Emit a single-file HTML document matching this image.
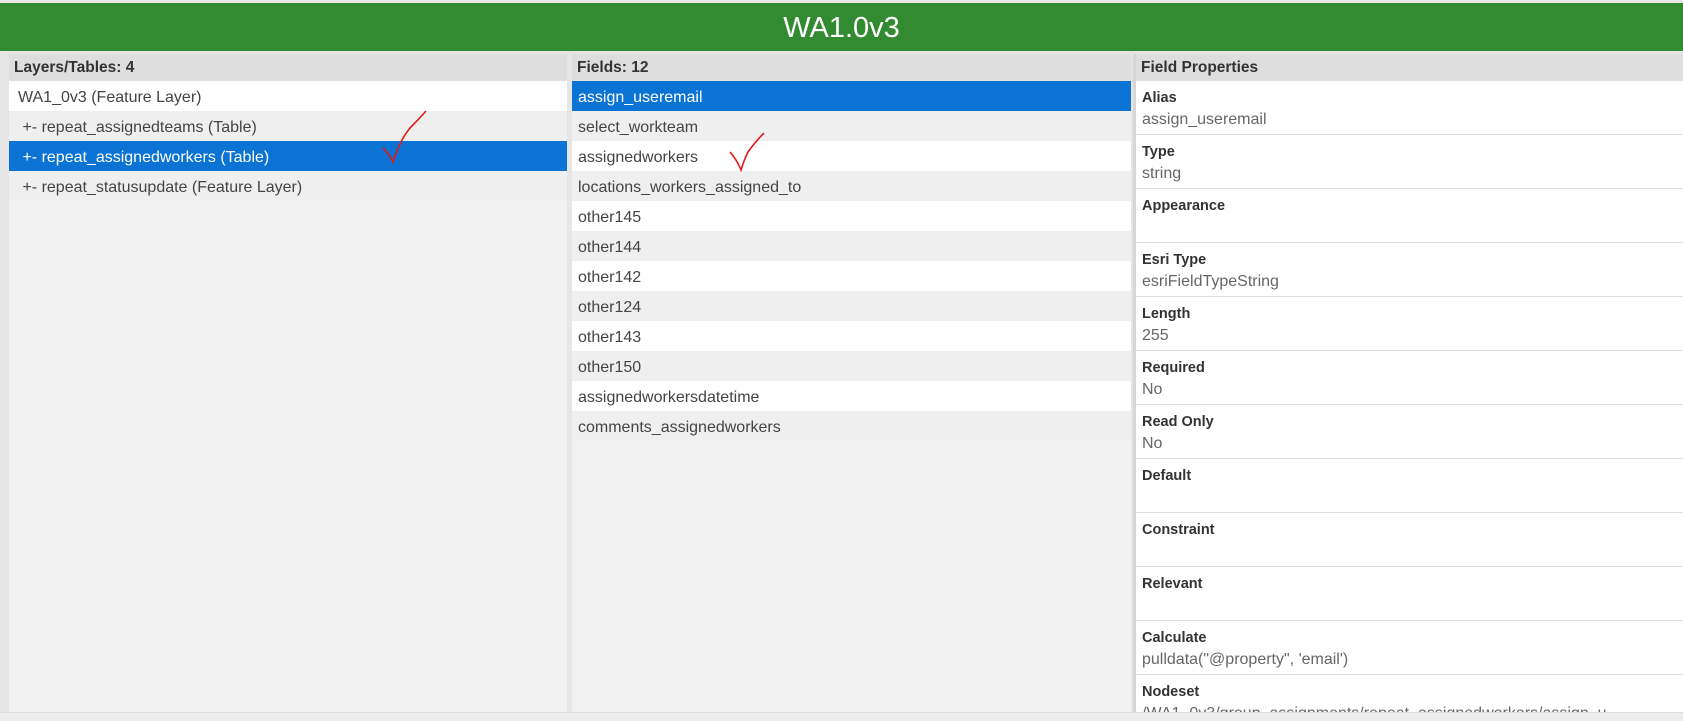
<!DOCTYPE html>
<html><head><meta charset="utf-8"><style>
*{margin:0;padding:0;box-sizing:border-box}
body{width:1683px;height:721px;overflow:hidden;background:#e6e6e6;font-family:"Liberation Sans",sans-serif;position:relative}
#hdr{position:absolute;left:0;top:3px;width:1683px;height:48px;background:#328a31;color:#fff;font-size:29px;text-align:center;line-height:50px}
.panel{position:absolute;top:54px;background:#f2f2f2}
.ph{height:27px;background:#dedede;font-weight:bold;font-size:15.5px;color:#333;line-height:28px;padding-left:5px}
.row{height:30px;line-height:33px;font-size:16px;color:#444;padding-left:9px;white-space:nowrap;overflow:hidden}
.w{background:#fff}.g{background:#efefef}.s{background:#0a73d3;color:#fff}
.prop{height:54px;border-bottom:1px solid #ddd;background:#fff;padding-left:6px;overflow:hidden}
.prop b{display:block;font-size:14.5px;color:#333;padding-top:9px;height:30px}
.prop span{display:block;font-size:16px;color:#666;white-space:nowrap;line-height:18px}
</style></head><body>
<div id="hdr">WA1.0v3</div>
<div class="panel" style="left:9px;width:558px;height:658px">
<div class="ph">Layers/Tables: 4</div>
<div class="row w">WA1_0v3 (Feature Layer)</div>
<div class="row g">&nbsp;+- repeat_assignedteams (Table)</div>
<div class="row s">&nbsp;+- repeat_assignedworkers (Table)</div>
<div class="row g">&nbsp;+- repeat_statusupdate (Feature Layer)</div>
</div>
<div class="panel" style="left:572px;width:559px;height:658px">
<div class="ph">Fields: 12</div>
<div class="row s" style="padding-left:6px">assign_useremail</div>
<div class="row g" style="padding-left:6px">select_workteam</div>
<div class="row w" style="padding-left:6px">assignedworkers</div>
<div class="row g" style="padding-left:6px">locations_workers_assigned_to</div>
<div class="row w" style="padding-left:6px">other145</div>
<div class="row g" style="padding-left:6px">other144</div>
<div class="row w" style="padding-left:6px">other142</div>
<div class="row g" style="padding-left:6px">other124</div>
<div class="row w" style="padding-left:6px">other143</div>
<div class="row g" style="padding-left:6px">other150</div>
<div class="row w" style="padding-left:6px">assignedworkersdatetime</div>
<div class="row g" style="padding-left:6px">comments_assignedworkers</div>
</div>
<div class="panel" style="left:1133px;width:550px;height:658px;border-left:3px solid #d6d6d6;overflow:hidden;background:#fff">
<div class="ph">Field Properties</div>
<div class="prop"><b>Alias</b><span>assign_useremail</span></div>
<div class="prop"><b>Type</b><span>string</span></div>
<div class="prop"><b>Appearance</b><span></span></div>
<div class="prop"><b>Esri Type</b><span>esriFieldTypeString</span></div>
<div class="prop"><b>Length</b><span>255</span></div>
<div class="prop"><b>Required</b><span>No</span></div>
<div class="prop"><b>Read Only</b><span>No</span></div>
<div class="prop"><b>Default</b><span></span></div>
<div class="prop"><b>Constraint</b><span></span></div>
<div class="prop"><b>Relevant</b><span></span></div>
<div class="prop"><b>Calculate</b><span>pulldata("@property", 'email')</span></div>
<div class="prop"><b>Nodeset</b><span>/WA1_0v3/group_assignments/repeat_assignedworkers/assign_u</span></div>
</div>
<div style="position:absolute;left:0;top:712px;width:1683px;height:9px;background:#ececec;border-top:1px solid #ddd"></div>
<svg style="position:absolute;left:0;top:0" width="1683" height="721">
<path d="M426 111 Q418 120 410 128 Q400 140 393 162 Q390 155 383 148" fill="none" stroke="#e01818" stroke-width="1.6"/>
<path d="M764 133 Q755 142 748 152 Q744 160 741 170 Q737 160 730 152" fill="none" stroke="#e01818" stroke-width="1.6"/>
</svg>
</body></html>
